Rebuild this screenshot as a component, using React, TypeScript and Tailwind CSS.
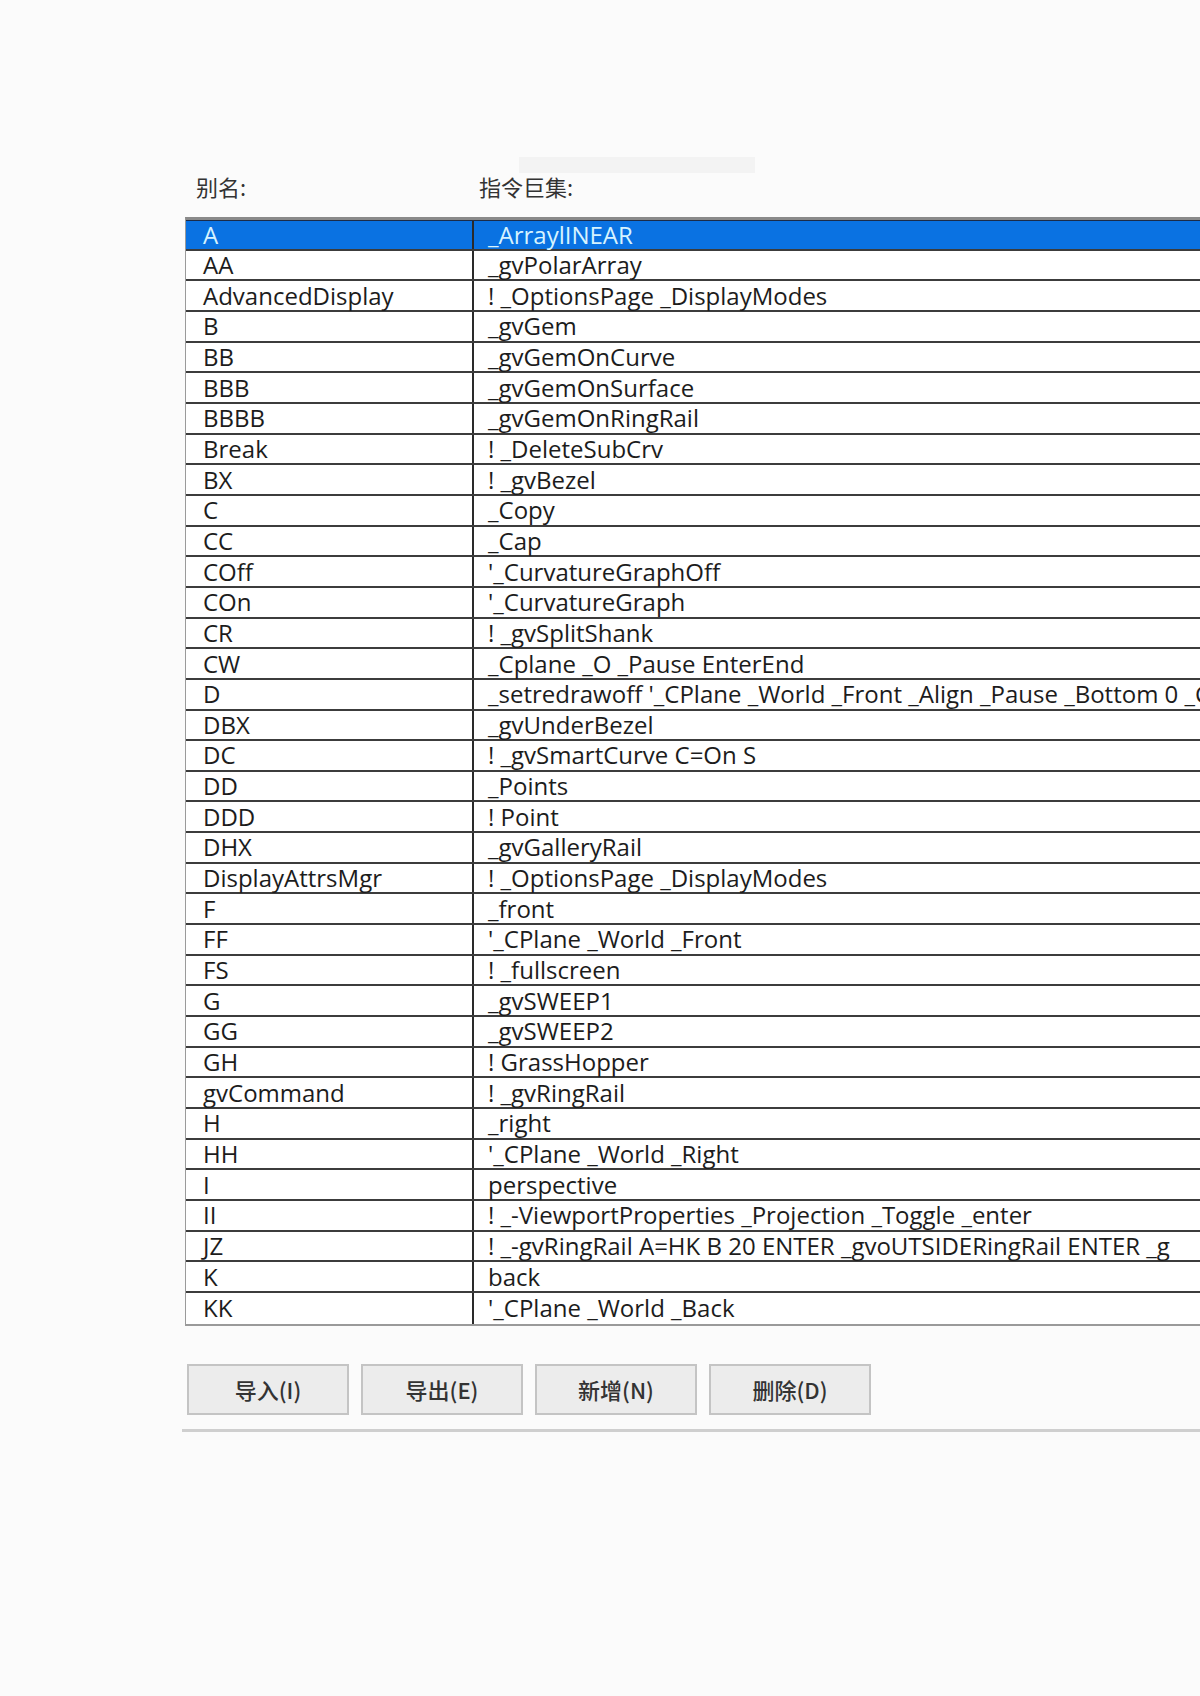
import React from 'react'

const rows: [string, string][] = [
  ['A', '_ArraylINEAR'],
  ['AA', '_gvPolarArray'],
  ['AdvancedDisplay', '! _OptionsPage _DisplayModes'],
  ['B', '_gvGem'],
  ['BB', '_gvGemOnCurve'],
  ['BBB', '_gvGemOnSurface'],
  ['BBBB', '_gvGemOnRingRail'],
  ['Break', '! _DeleteSubCrv'],
  ['BX', '! _gvBezel'],
  ['C', '_Copy'],
  ['CC', '_Cap'],
  ['COff', "'_CurvatureGraphOff"],
  ['COn', "'_CurvatureGraph"],
  ['CR', '! _gvSplitShank'],
  ['CW', '_Cplane _O _Pause EnterEnd'],
  ['D', "_setredrawoff '_CPlane _World _Front _Align _Pause _Bottom 0 _C"],
  ['DBX', '_gvUnderBezel'],
  ['DC', '! _gvSmartCurve C=On S'],
  ['DD', '_Points'],
  ['DDD', '! Point'],
  ['DHX', '_gvGalleryRail'],
  ['DisplayAttrsMgr', '! _OptionsPage _DisplayModes'],
  ['F', '_front'],
  ['FF', "'_CPlane _World _Front"],
  ['FS', '! _fullscreen'],
  ['G', '_gvSWEEP1'],
  ['GG', '_gvSWEEP2'],
  ['GH', '! GrassHopper'],
  ['gvCommand', '! _gvRingRail'],
  ['H', '_right'],
  ['HH', "'_CPlane _World _Right"],
  ['I', 'perspective'],
  ['II', '! _-ViewportProperties _Projection _Toggle _enter'],
  ['JZ', '! _-gvRingRail A=HK B 20 ENTER _gvoUTSIDERingRail ENTER _g'],
  ['K', 'back'],
  ['KK', "'_CPlane _World _Back"],
]

const buttons = ['导入(I)', '导出(E)', '新增(N)', '删除(D)']

export default function App() {
  return (
    <div className="w-[1200px] h-[1696px] overflow-hidden bg-[#fbfbfb] text-[#1c1c1c] font-['Open_Sans','Noto_Sans_CJK_SC',sans-serif]">
      {/* faint strip at the top */}
      <div className="h-[173px] flex items-end pl-[519px]">
        <div className="w-[236px] h-[16px] bg-[#f3f3f3]" />
      </div>

      {/* column labels */}
      <div className="flex h-[44px] items-start pl-[196px] text-[22px] leading-[26px] font-['Noto_Sans_CJK_SC',sans-serif] text-[#333]">
        <span className="w-[283px]">别名:</span>
        <span>指令巨集:</span>
      </div>

      {/* alias table */}
      <div className="pl-[185px]">
        <div className="w-[1100px] border-l border-t-[3px] border-b-2 border-l-[#9a9a9a] border-t-[#8a8a8a] border-b-[#9a9a9a] bg-white">
          {rows.map(([alias, macro], i) => {
            const selected = i === 0
            const last = i === rows.length - 1
            return (
              <div
                key={alias}
                className={`flex h-[30.67px] text-[24px] leading-[28px] whitespace-nowrap ${
                  last ? '' : 'border-b-2 border-[#3c3c3c]'
                } ${selected ? 'bg-[#0a72e2] text-[#d6f3ff] border-t border-t-[#1b2b48]' : ''}`}
              >
                <div className="w-[288px] shrink-0 flex items-center pl-[17px] border-r-2 border-[#2a2a2a]">
                  {alias}
                </div>
                <div className="flex-1 flex items-center pl-[14px]">{macro}</div>
              </div>
            )
          })}
        </div>
      </div>

      {/* buttons */}
      <div className="flex gap-[12px] pl-[187px] pt-[38px]">
        {buttons.map((b) => (
          <button
            key={b}
            className="w-[162px] h-[51px] bg-[#ececec] border-2 border-[#c4c4c4] text-[22px] font-medium text-[#333] font-['Noto_Sans_CJK_SC',sans-serif] flex items-center justify-center"
          >
            {b}
          </button>
        ))}
      </div>

      <div className="ml-[182px] mt-[14px] h-[3px] bg-[#cfcfcf]" />
    </div>
  )
}
